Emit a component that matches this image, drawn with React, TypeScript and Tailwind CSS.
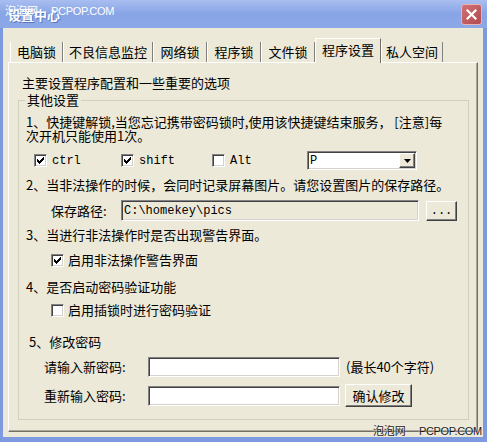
import type { ReactNode } from "react";

const sunken =
  "border border-t-[#848284] border-l-[#848284] border-r-white border-b-white shadow-[inset_1px_1px_0_#424142,inset_-1px_-1px_0_#d6d3ce]";
const raised =
  "border border-t-white border-l-white border-r-[#404040] border-b-[#404040] shadow-[inset_-1px_-1px_0_#808080]";
const mono = "font-['Liberation_Mono','Noto_Sans_CJK_SC',monospace] text-[12px]";

const checkPixels = [
  "......X",
  ".....XX",
  "X...XXX",
  "XX.XXX.",
  "XXXXX..",
  ".XXX...",
  "..X....",
];

function CheckBox({ checked }: { checked?: boolean }) {
  return (
    <span className={`flex size-[13px] shrink-0 items-center justify-center bg-white ${sunken}`}>
      {checked && (
        <svg width="7" height="7" viewBox="0 0 7 7" shapeRendering="crispEdges">
          {checkPixels.map((row, y) =>
            row.split("").map((c, x) =>
              c === "X" ? <rect key={`${x}-${y}`} x={x} y={y} width="1" height="1" fill="#000" /> : null,
            ),
          )}
        </svg>
      )}
    </span>
  );
}

function Tab({ label, width, active }: { label: string; width: number; active?: boolean }) {
  if (active) {
    return (
      <div
        className="relative -mb-px flex h-[25px] items-start justify-center border-t border-l border-r border-t-white border-l-white border-r-[#716f64] bg-[#ece9d8] pt-[4px]"
        style={{ width }}
      >
        {label}
      </div>
    );
  }
  return (
    <div
      className="flex h-[20px] items-center justify-center border-l border-r border-l-white border-r-[#808080]"
      style={{ width }}
    >
      {label}
    </div>
  );
}

function Watermark({ className }: { className: string }) {
  return (
    <div className={`pointer-events-none absolute flex items-baseline text-[11px] leading-none ${className}`}>
      <span>泡泡网</span>
      <span className="ml-[13px] font-['Liberation_Sans',sans-serif] tracking-[-0.3px]">PCPOP.COM</span>
    </div>
  );
}

function Line({ children, className = "" }: { children: ReactNode; className?: string }) {
  return <div className={`whitespace-nowrap pl-[7px] ${className}`}>{children}</div>;
}

export default function App() {
  return (
    <div className="relative flex h-[442px] w-[487px] flex-col bg-[#7d99e0] font-['Noto_Sans_CJK_SC','Liberation_Sans',sans-serif] text-[13px] leading-[14px] text-black">
      {/* title bar */}
      <div className="flex h-[28px] shrink-0 items-start justify-between bg-gradient-to-b from-[#a9bef0] via-[#88a4e6] to-[#8ca8e8] pl-[8px] pr-[5px]">
        <span className="mt-[8px] font-bold text-white [text-shadow:1px_1px_0_#5a74b8]">设置中心</span>
        <button className="mt-[4px] flex size-[21px] items-center justify-center rounded-[3px] border border-[#e6b4b4] bg-gradient-to-br from-[#d27376] to-[#b04a50]">
          <svg width="11" height="11" viewBox="0 0 11 11">
            <path d="M1.5 1.5l8 8M9.5 1.5l-8 8" stroke="#fff" strokeWidth="2.2" strokeLinecap="square" />
          </svg>
        </button>
      </div>

      <div className="mr-[4px] mb-[5px] ml-[3px] flex flex-1 flex-col bg-[#ece9d8] px-[5px] pt-[10px] pb-[5px]">
        {/* tabs */}
        <div className="ml-[2px] flex h-[24px] items-end">
          <Tab label="电脑锁" width={53} />
          <Tab label="不良信息监控" width={90} />
          <Tab label="网络锁" width={54} />
          <Tab label="程序锁" width={54} />
          <Tab label="文件锁" width={54} />
          <Tab label="程序设置" width={66} active />
          <Tab label="私人空间" width={62} />
        </div>

        {/* panel */}
        <div className="flex flex-1 flex-col border border-t-white border-l-white border-r-[#716f64] border-b-[#716f64] pt-[13px] pr-[8px] pl-[9px] shadow-[inset_-1px_-1px_0_#aca899]">
          <div className="ml-[4px]">主要设置程序配置和一些重要的选项</div>

          <fieldset className="mt-[3px] border border-[#d0d0bf]">
            <legend className="ml-[6px] px-[2px]">其他设置</legend>
            <div className="flex flex-col pb-[12px]">
              <Line className="mt-[8px]">
                1、快捷键解锁,当您忘记携带密码锁时,使用该快捷键结束服务， [注意]每
                <br />
                次开机只能使用1次。
              </Line>

              <div className="mt-[8px] flex h-[19px] items-center pl-[15px]">
                <label className="flex w-[87px] items-center gap-[5px]">
                  <CheckBox checked />
                  <span className={mono}>ctrl</span>
                </label>
                <label className="flex w-[91px] items-center gap-[5px]">
                  <CheckBox checked />
                  <span className={mono}>shift</span>
                </label>
                <label className="flex w-[95px] items-center gap-[5px]">
                  <CheckBox />
                  <span className={mono}>Alt</span>
                </label>
                <div className={`flex h-[19px] w-[110px] items-center bg-white ${sunken}`}>
                  <span className={`flex-1 pl-[2px] ${mono}`}>P</span>
                  <span className={`mr-px flex h-[15px] w-[16px] items-center justify-center bg-[#ece9d8] ${raised}`}>
                    <svg width="7" height="4" viewBox="0 0 7 4">
                      <path d="M0 0h7L3.5 4z" fill="#000" />
                    </svg>
                  </span>
                </div>
              </div>

              <Line className="mt-[8px]">2、当非法操作的时候，会同时记录屏幕图片。请您设置图片的保存路径。</Line>

              <div className="mt-[8px] flex h-[21px] items-center pl-[32px]">
                <span className="w-[70px]">保存路径:</span>
                <div className={`flex h-[21px] w-[298px] items-center bg-[#ece9d8] pl-[2px] ${sunken}`}>
                  <span className={mono}>C:\homekey\pics</span>
                </div>
                <button className={`ml-[7px] flex h-[20px] w-[31px] items-center justify-center bg-[#ece9d8] ${raised} ${mono}`}>
                  ...
                </button>
              </div>

              <Line className="mt-[7px]">3、当进行非法操作时是否出现警告界面。</Line>

              <label className="mt-[11px] flex h-[14px] items-center gap-[4px] pl-[32px]">
                <CheckBox checked />
                <span>启用非法操作警告界面</span>
              </label>

              <Line className="mt-[13px]">4、是否启动密码验证功能</Line>

              <label className="mt-[9px] flex h-[14px] items-center gap-[4px] pl-[32px]">
                <CheckBox />
                <span>启用插锁时进行密码验证</span>
              </label>

              <Line className="mt-[18px] pl-[10px]">5、修改密码</Line>

              <div className="mt-[8px] flex h-[20px] items-center pl-[25px]">
                <span className="w-[104px]">请输入新密码:</span>
                <div className={`h-[20px] w-[192px] bg-white ${sunken}`} />
                <span className="ml-[6px]">(最长40个字符)</span>
              </div>

              <div className="mt-[7px] flex h-[23px] items-center pl-[25px]">
                <span className="w-[104px]">重新输入密码:</span>
                <div className={`h-[20px] w-[192px] bg-white ${sunken}`} />
                <button className={`ml-[5px] flex h-[23px] w-[67px] items-center justify-center bg-[#ece9d8] ${raised}`}>
                  确认修改
                </button>
              </div>
            </div>
          </fieldset>
        </div>
      </div>

      <Watermark className="top-[5px] left-[5px] text-white" />
      <Watermark className="right-[5px] bottom-[5px] text-[#1a1a1a] [text-shadow:0_0_2px_#fff]" />
    </div>
  );
}
